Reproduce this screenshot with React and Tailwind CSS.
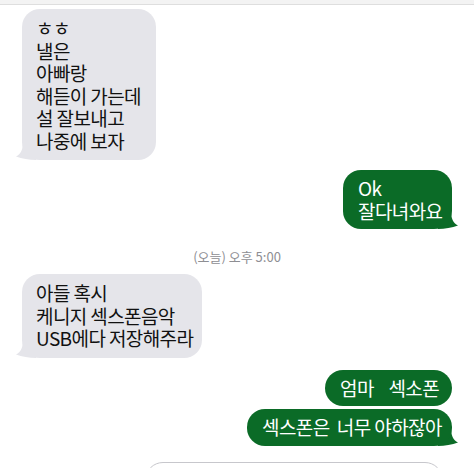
const font = { fontFamily: '"Noto Sans CJK KR", "Noto Sans", sans-serif' }

function GrayTail() {
    return (
        <svg className="absolute -left-[6px] bottom-0" width="20" height="18" viewBox="0 0 20 18">
            <path d="M20 0 L20 18 C13 18 6 16.5 0 14.5 C5 12 7 7 7 0 Z" fill="#e5e5ea" />
        </svg>
    )
}

function GreenTail() {
    return (
        <svg className="absolute -right-[6px] bottom-0" width="20" height="18" viewBox="0 0 20 18">
            <path d="M0 0 L0 18 C7 18 14 16.5 20 14.5 C15 12 13 7 13 0 Z" fill="#0b6b27" />
        </svg>
    )
}

function Received({ lines, width, tail, className = '' }) {
    return (
        <div className={`relative shrink-0 self-start ml-[22px] ${className}`} style={{ width }}>
            <div className="relative z-10 rounded-[18px] bg-[#e5e5ea] pl-[14px] py-[8px] text-[19px] leading-[22.5px] tracking-[-0.6px] text-[#111]">
                {lines.map((l, i) => (
                    <div key={i} className="whitespace-pre">{l}</div>
                ))}
            </div>
            {tail && <GrayTail />}
        </div>
    )
}

function Sent({ lines, width, tail, className = '' }) {
    return (
        <div className={`relative shrink-0 self-end mr-[22px] ${className}`} style={{ width }}>
            <div className="relative z-10 rounded-[18px] bg-[#0b6b27] pl-[15px] py-[7px] text-[19px] leading-[22.5px] tracking-[-0.6px] text-white">
                {lines.map((l, i) => (
                    <div key={i} className="whitespace-pre">{l}</div>
                ))}
            </div>
            {tail && <GreenTail />}
        </div>
    )
}

export default function App() {
    return (
        <div className="w-[474px] h-[468px] overflow-hidden bg-white flex flex-col" style={font}>
            <div className="h-[5px] shrink-0 bg-[#f3f3f3] border-b border-[#dedede]" />

            <Received
                className="mt-[4px]"
                width={134}
                tail
                lines={['ㅎㅎ', '낼은', '아빠랑', '해듣이 가는데', '설 잘보내고', '나중에 보자']}
            />

            <Sent className="mt-[10px]" width={109} tail lines={['Ok', '잘다녀와요']} />

            <div className="h-[45px] shrink-0 flex items-center justify-center text-[13px] text-[#8e8e93] pt-[10px]">
                (오늘) 오후 5:00
            </div>

            <Received
                width={180}
                tail
                lines={['아들 혹시', '케니지 섹스폰음악', 'USB에다 저장해주라']}
            />

            <Sent className="mt-[12px]" width={127} lines={['엄마    섹소폰']} />
            <Sent className="mt-[3px]" width={205} tail lines={['섹스폰은  너무 야하잖아']} />

            <div className="mt-[16px] ml-[145px] w-[298px] h-[36px] shrink-0 rounded-[18px] border border-[#c7c7cc]" />
        </div>
    )
}
